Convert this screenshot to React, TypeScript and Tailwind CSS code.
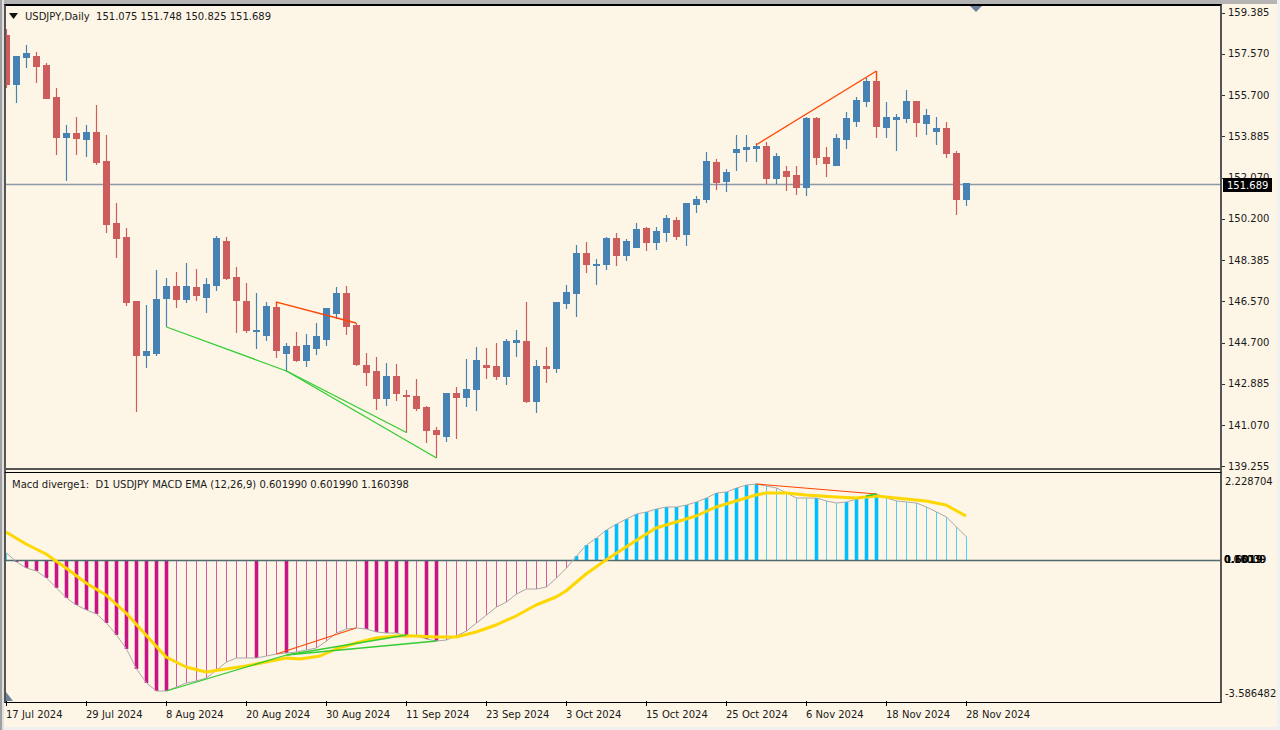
const candles: number[][] = [
  [29, 35, 85, 88, 0], [56, 56, 85, 103, 1], [45, 53, 58, 68, 1], [52, 56, 67, 83, 0], [63, 65, 99, 99, 0],
  [88, 97, 138, 155, 0], [125, 133, 138, 181, 1], [117, 133, 139, 155, 0], [125, 132, 140, 157, 1], [105, 132, 163, 165, 0],
  [135, 161, 225, 233, 0], [203, 223, 239, 258, 0], [228, 237, 303, 306, 0], [301, 301, 356, 412, 0], [305, 351, 356, 368, 1],
  [270, 299, 354, 356, 1], [278, 286, 299, 327, 1], [272, 286, 300, 308, 0], [263, 286, 300, 303, 1], [269, 287, 296, 301, 0],
  [278, 284, 298, 313, 1], [236, 238, 286, 291, 1], [237, 241, 279, 280, 0], [267, 277, 301, 333, 0], [283, 301, 331, 333, 0],
  [293, 330, 332, 349, 1], [302, 306, 336, 341, 1], [302, 307, 351, 358, 0], [343, 346, 354, 372, 1], [332, 346, 361, 362, 0],
  [334, 345, 361, 367, 1], [323, 336, 349, 355, 1], [308, 308, 340, 346, 1], [287, 293, 314, 319, 1], [286, 293, 327, 335, 0],
  [323, 325, 365, 366, 0], [353, 365, 373, 386, 0], [357, 371, 399, 410, 0], [363, 376, 399, 406, 1], [364, 376, 394, 401, 0],
  [390, 395, 396, 433, 0], [379, 396, 409, 411, 0], [406, 407, 431, 443, 0], [427, 430, 435, 458, 0], [393, 393, 437, 442, 1],
  [387, 393, 398, 439, 0], [359, 389, 398, 407, 1], [347, 360, 390, 411, 1], [348, 365, 368, 379, 0], [343, 366, 377, 380, 0],
  [339, 341, 377, 385, 1], [330, 340, 343, 357, 1], [302, 341, 402, 403, 0], [360, 366, 402, 413, 1], [347, 366, 369, 383, 0],
  [302, 302, 369, 373, 1], [285, 292, 304, 309, 1], [245, 253, 294, 317, 1], [242, 253, 265, 273, 0], [259, 264, 265, 285, 1],
  [237, 238, 265, 270, 1], [233, 238, 256, 266, 0], [239, 241, 256, 261, 1], [223, 229, 248, 248, 1], [227, 228, 243, 251, 0],
  [227, 231, 243, 250, 1], [215, 218, 233, 242, 1], [217, 220, 237, 240, 0], [203, 203, 235, 246, 1], [196, 199, 205, 213, 1],
  [152, 161, 200, 203, 1], [159, 162, 183, 190, 0], [169, 172, 182, 192, 1], [135, 149, 153, 171, 1], [135, 147, 150, 162, 1],
  [143, 146, 149, 162, 1], [142, 146, 179, 184, 0], [153, 156, 179, 184, 1], [166, 171, 177, 191, 0], [166, 175, 188, 195, 0],
  [117, 118, 188, 196, 1], [117, 118, 158, 165, 0], [147, 157, 164, 177, 0], [134, 138, 166, 166, 1], [112, 118, 140, 149, 1],
  [97, 100, 122, 127, 1], [78, 81, 102, 107, 1], [71, 81, 127, 138, 0], [102, 117, 128, 138, 1], [114, 117, 120, 151, 1],
  [90, 101, 119, 123, 1], [101, 101, 123, 137, 0], [109, 115, 124, 135, 1], [117, 128, 132, 145, 1], [122, 128, 154, 158, 0],
  [151, 153, 200, 215, 0], [183, 183, 200, 206, 1],
];

// y of each histogram bar, from x = 6 every 10px
const macd = [
  553, 562, 568, 571, 578, 588, 598, 605, 610, 614, 623, 635, 649, 669, 683, 691, 691, 687, 683, 681,
  678, 670, 662, 658, 658, 658, 656, 654, 653, 652, 650, 648, 641, 633, 629, 628, 629, 632, 633, 633,
  636, 636, 639, 641, 640, 636, 631, 623, 615, 607, 602, 594, 589, 589, 587, 578, 568, 556, 545, 538,
  530, 524, 519, 514, 512, 509, 507, 507, 505, 502, 498, 493, 492, 488, 485, 484, 486, 488, 493, 498,
  498, 498, 501, 503, 502, 499, 496, 494, 498, 501, 502, 503, 507, 512, 517, 527, 537,
];

const thick = new Set([
  16, 26, 36, 46, 56, 66, 76, 86, 96, 106, 116, 126, 136, 146, 156, 166, 256, 286, 366, 376, 386, 396, 406, 426, 436,
  576, 586, 596, 606, 616, 626, 636, 646, 656, 666, 676, 686, 696, 706, 716, 726, 736, 746, 756, 816, 846, 856, 866, 876,
]);

const signal =
  "6,532 26,544 46,554 66,568 86,583 106,595 126,613 146,635 166,657 186,667 206,672 226,669 246,666 266,662 286,658 300,659 320,656 336,649 356,643 376,638 396,636 416,636 436,637 456,637 476,632 496,625 516,616 536,605 556,597 566,591 586,574 606,560 626,547 640,538 656,528 676,522 696,516 716,507 736,501 756,495 766,493 786,493 806,495 836,497 856,498 876,496 896,498 926,501 946,505 966,516";

const prices = ["159.385", "157.570", "155.700", "153.885", "152.070", "150.200", "148.385", "146.570", "144.700", "142.885", "141.070", "139.255"];
const dates = ["17 Jul 2024", "29 Jul 2024", "8 Aug 2024", "20 Aug 2024", "30 Aug 2024", "11 Sep 2024", "23 Sep 2024", "3 Oct 2024", "15 Oct 2024", "25 Oct 2024", "6 Nov 2024", "18 Nov 2024", "28 Nov 2024"];

const PriceChart = () => (
  <svg viewBox="6 6 1214 462" className="block w-[1214px] h-[462px]">
    <line x1="6" y1="184.5" x2="1220" y2="184.5" stroke="#8b99a8" strokeWidth="1.3" />
    {candles.map(([high, top, bottom, low, up], i) => {
      const x = 6 + i * 10;
      const color = up ? "#4682b4" : "#cd5c5c";
      return (
        <g key={x}>
          <line x1={x + 0.5} y1={high} x2={x + 0.5} y2={low} stroke={color} strokeWidth="1.2" />
          <rect x={x - 3} y={top} width="7" height={Math.max(bottom - top, 2)} fill={color} />
        </g>
      );
    })}
    <g fill="none" stroke="#ff4500" strokeWidth="1.3">
      <polyline points="276.5,307 276.5,302 356,323" />
      <line x1="756" y1="145" x2="876.5" y2="71" />
      <line x1="876.5" y1="71" x2="876.5" y2="81" />
    </g>
    <g fill="none" stroke="#32cd32" strokeWidth="1.3">
      <line x1="166.5" y1="327" x2="286.5" y2="371" />
      <line x1="286.5" y1="371" x2="406.5" y2="432.5" />
      <line x1="286.5" y1="371" x2="436.5" y2="458" />
    </g>
    <polygon points="970,6 982,6 976,12" fill="#6b8299" />
    <polygon points="9,13 18,13 13.5,19" fill="#111" />
  </svg>
);

const MacdChart = () => (
  <svg viewBox="6 473 1214 228" className="block w-[1214px] h-[228px]">
    {macd.map((y, i) => {
      const x = 6 + i * 10;
      const color = y < 560 ? "#00bfff" : "#c71585";
      return thick.has(x) ? (
        <line key={x} x1={x + 0.5} y1="560" x2={x + 0.5} y2={y} stroke={color} strokeWidth="3.6" />
      ) : (
        <line key={x} x1={x + 0.5} y1="560" x2={x + 0.5} y2={y} stroke={color} strokeOpacity="0.7" strokeWidth="1" />
      );
    })}
    <line x1="6" y1="560.5" x2="1220" y2="560.5" stroke="#4f6b6b" strokeWidth="1.3" />
    <polyline
      points={macd.map((y, i) => `${6.5 + i * 10},${y}`).join(" ")}
      fill="none"
      stroke="#a9a9a9"
      strokeWidth="1"
    />
    <polyline points={signal} fill="none" stroke="#ffd700" strokeWidth="3" strokeLinejoin="round" />
    <g fill="none" stroke="#ff4500" strokeWidth="1.2">
      <line x1="276.5" y1="654" x2="356" y2="628" />
      <line x1="756" y1="484" x2="876.5" y2="494" />
    </g>
    <g fill="none" stroke="#32cd32" strokeWidth="1.3">
      <line x1="166.5" y1="691" x2="286.5" y2="655" />
      <line x1="286.5" y1="655" x2="406.5" y2="635" />
      <line x1="286.5" y1="655" x2="436.5" y2="641" />
      <line x1="866" y1="496" x2="876.5" y2="494" />
    </g>
    <polygon points="6,692 13,701 6,701" fill="#6b8299" />
  </svg>
);

const App = () => {
  return (
    <div className="w-[1280px] h-[730px] overflow-hidden flex bg-[#f0f0f0] font-['DejaVu_Sans',Verdana,sans-serif] text-[10px] leading-[14px] text-[#1a1a1a]">
      <div className="w-[2px] bg-[#a0a0a0]" />
      <div className="w-[2px] bg-[#e0e0e0]" />
      <div className="w-[1273px] flex flex-col">
        <div className="h-[4px] bg-[#b4b4b4]" />
        <div className="h-[723px] bg-[#fdf5e6] flex flex-col">
          <div className="flex h-[466px]">
            <div className="relative w-[1218px] border-2 border-[#555555] border-t-black">
              <PriceChart />
              <div className="absolute left-[19px] top-[4px] whitespace-pre">USDJPY,Daily  151.075 151.748 150.825 151.689</div>
            </div>
            <div className="relative flex-1">
              <div className="mt-[2px] h-[468px] flex flex-col justify-between">
                {prices.map((p) => (
                  <div key={p} className="flex items-center gap-[3px] h-[14px]">
                    <div className="w-[3px] h-px bg-[#333333]" />
                    {p}
                  </div>
                ))}
              </div>
              <div className="absolute left-[1px] top-[174px] w-[49px] h-[14px] pl-[4px] pt-px bg-black text-white">151.689</div>
            </div>
          </div>
          <div className="h-[2px] w-[1218px] border-x-2 border-[#555555]" />
          <div className="flex h-[231px]">
            <div className="relative w-[1218px] border-x-2 border-t border-b-[1.5px] border-[#555555] border-t-black border-b-black">
              <MacdChart />
              <div className="absolute left-[6px] top-[5px] whitespace-pre">Macd diverge1:  D1 USDJPY MACD EMA (12,26,9) 0.601990 0.601990 1.160398</div>
            </div>
            <div className="relative flex-1 pl-[3px]">
              <div className="mt-[3px] h-[226px] flex flex-col justify-between">
                <div>2.228704</div>
                <div>-3.586482</div>
              </div>
              <div className="absolute left-[2px] top-[81px] font-bold text-black">0.6019</div>
              <div className="absolute left-[3px] top-[81px] text-black">1.16039</div>
              <div className="absolute left-[2px] top-[81px] text-black">0.00000</div>
            </div>
          </div>
          <div className="flex pl-[2px] -mt-[2px]">
            {dates.map((d) => (
              <div key={d} className="w-[80px] shrink-0">
                <div className="w-px h-[5px] bg-black" />
                <div className="whitespace-nowrap mt-[2px]">{d}</div>
              </div>
            ))}
          </div>
        </div>
      </div>
    </div>
  );
};

export default App;
